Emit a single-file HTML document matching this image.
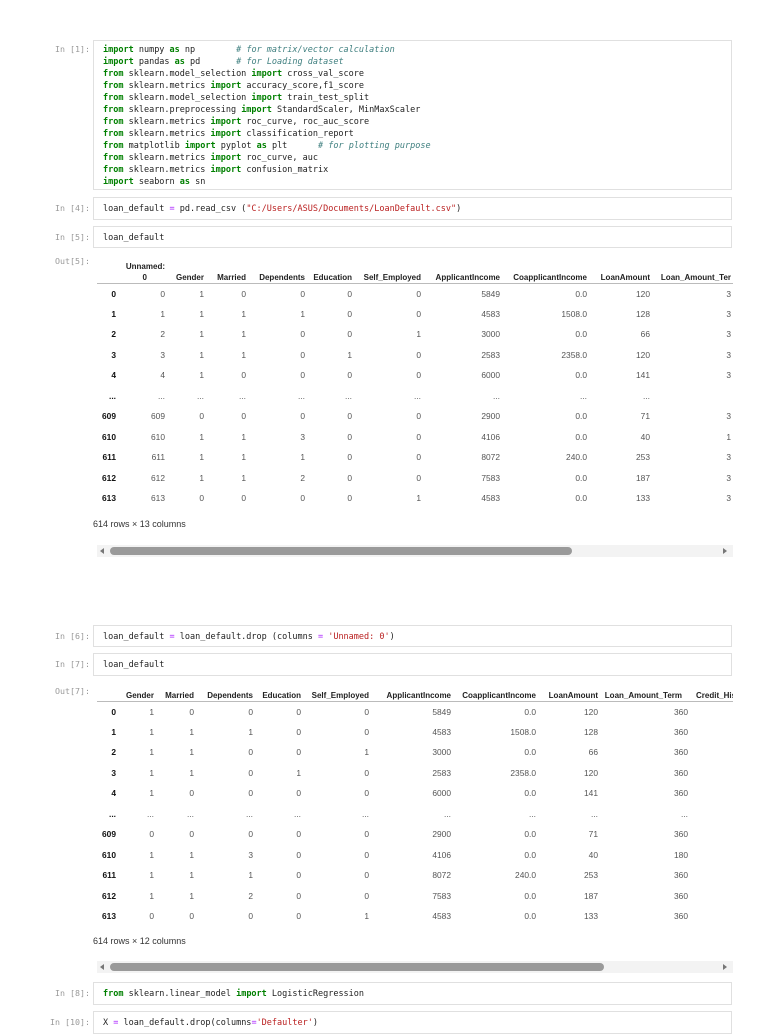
<!DOCTYPE html>
<html><head><meta charset="utf-8">
<style>
*{margin:0;padding:0;box-sizing:border-box}
body{width:768px;height:1024px;background:#fff;position:relative;overflow:hidden;font-family:"Liberation Sans",sans-serif}
.lbl{position:absolute;left:46px;font-family:"DejaVu Sans Mono",monospace;font-size:8.3px;color:#999;width:44px;text-align:right}
.box{position:absolute;left:93px;width:639px;border:1px solid #e0e0e0;background:#fff;font-family:"DejaVu Sans Mono",monospace;font-size:8.5px;color:#222;padding:3px 9px;line-height:12px;white-space:pre}
.k{color:#008000;font-weight:bold}.c{color:#408080;font-style:italic}.s{color:#ba2121}.o{color:#aa22ff}
.tw{position:absolute;left:97px;width:636px;max-width:636px;overflow:hidden;clip-path:inset(0 0 0 0)}
table{border-collapse:collapse;table-layout:fixed;font-size:8.4px;color:#222}
th{font-weight:bold;font-size:8px;text-align:right;line-height:11px;vertical-align:bottom;white-space:nowrap;overflow:hidden}
td{text-align:right;height:20.5px;white-space:nowrap;overflow:hidden;color:#555}
td.i{font-weight:bold;color:#111}
thead tr{border-bottom:1px solid #bbb}
.rows{position:absolute;left:93px;font-size:9px;color:#333}
.sb{position:absolute;left:97px;width:636px;height:12px;background:#f3f3f3}
.sb .t{position:absolute;left:13px;top:2px;height:8px;background:#9a9a9a;border-radius:4px}
.sb .l{position:absolute;left:3px;top:3px;border-right:4px solid #777;border-top:3px solid transparent;border-bottom:3px solid transparent}
.sb .r{position:absolute;right:6px;top:3px;border-left:4px solid #777;border-top:3px solid transparent;border-bottom:3px solid transparent}
</style></head><body>

<div class="lbl" style="top:44px">In [1]:</div>
<div class="box" style="top:40px;height:150px"><span class="k">import</span> numpy <span class="k">as</span> np        <span class="c"># for matrix/vector calculation</span>
<span class="k">import</span> pandas <span class="k">as</span> pd       <span class="c"># for Loading dataset</span>
<span class="k">from</span> sklearn.model_selection <span class="k">import</span> cross_val_score
<span class="k">from</span> sklearn.metrics <span class="k">import</span> accuracy_score,f1_score
<span class="k">from</span> sklearn.model_selection <span class="k">import</span> train_test_split
<span class="k">from</span> sklearn.preprocessing <span class="k">import</span> StandardScaler, MinMaxScaler
<span class="k">from</span> sklearn.metrics <span class="k">import</span> roc_curve, roc_auc_score
<span class="k">from</span> sklearn.metrics <span class="k">import</span> classification_report
<span class="k">from</span> matplotlib <span class="k">import</span> pyplot <span class="k">as</span> plt      <span class="c"># for plotting purpose</span>
<span class="k">from</span> sklearn.metrics <span class="k">import</span> roc_curve, auc
<span class="k">from</span> sklearn.metrics <span class="k">import</span> confusion_matrix
<span class="k">import</span> seaborn <span class="k">as</span> sn</div>

<div class="lbl" style="top:203px">In [4]:</div>
<div class="box" style="top:197px;height:23px;padding-top:5px">loan_default <span class="o">=</span> pd.read_csv (<span class="s">"C:/Users/ASUS/Documents/LoanDefault.csv"</span>)</div>
<div class="lbl" style="top:232px">In [5]:</div>
<div class="box" style="top:226px;height:22px;padding-top:5px">loan_default</div>
<div class="lbl" style="top:256px">Out[5]:</div>

<div class="tw" style="top:254px">
<table style="width:636px">
<colgroup><col style="width:19px"><col style="width:49px"><col style="width:39px"><col style="width:42px"><col style="width:59px"><col style="width:47px"><col style="width:69px"><col style="width:79px"><col style="width:87px"><col style="width:63px"><col style="width:81px"><col style="width:2px"></colgroup>
<thead><tr style="height:29px"><th></th><th style="text-align:right">Unnamed:<br><span style="padding-right:18px">0</span></th><th>Gender</th><th>Married</th><th>Dependents</th><th>Education</th><th>Self_Employed</th><th>ApplicantIncome</th><th>CoapplicantIncome</th><th>LoanAmount</th><th>Loan_Amount_Ter</th><th></th></tr></thead>
<tbody>
<tr><td class="i">0</td><td>0</td><td>1</td><td>0</td><td>0</td><td>0</td><td>0</td><td>5849</td><td>0.0</td><td>120</td><td>3</td><td></td></tr>
<tr><td class="i">1</td><td>1</td><td>1</td><td>1</td><td>1</td><td>0</td><td>0</td><td>4583</td><td>1508.0</td><td>128</td><td>3</td><td></td></tr>
<tr><td class="i">2</td><td>2</td><td>1</td><td>1</td><td>0</td><td>0</td><td>1</td><td>3000</td><td>0.0</td><td>66</td><td>3</td><td></td></tr>
<tr><td class="i">3</td><td>3</td><td>1</td><td>1</td><td>0</td><td>1</td><td>0</td><td>2583</td><td>2358.0</td><td>120</td><td>3</td><td></td></tr>
<tr><td class="i">4</td><td>4</td><td>1</td><td>0</td><td>0</td><td>0</td><td>0</td><td>6000</td><td>0.0</td><td>141</td><td>3</td><td></td></tr>
<tr><td class="i">...</td><td>...</td><td>...</td><td>...</td><td>...</td><td>...</td><td>...</td><td>...</td><td>...</td><td>...</td><td></td><td></td></tr>
<tr><td class="i">609</td><td>609</td><td>0</td><td>0</td><td>0</td><td>0</td><td>0</td><td>2900</td><td>0.0</td><td>71</td><td>3</td><td></td></tr>
<tr><td class="i">610</td><td>610</td><td>1</td><td>1</td><td>3</td><td>0</td><td>0</td><td>4106</td><td>0.0</td><td>40</td><td>1</td><td></td></tr>
<tr><td class="i">611</td><td>611</td><td>1</td><td>1</td><td>1</td><td>0</td><td>0</td><td>8072</td><td>240.0</td><td>253</td><td>3</td><td></td></tr>
<tr><td class="i">612</td><td>612</td><td>1</td><td>1</td><td>2</td><td>0</td><td>0</td><td>7583</td><td>0.0</td><td>187</td><td>3</td><td></td></tr>
<tr><td class="i">613</td><td>613</td><td>0</td><td>0</td><td>0</td><td>0</td><td>1</td><td>4583</td><td>0.0</td><td>133</td><td>3</td><td></td></tr>
</tbody></table></div>
<div class="rows" style="top:519px">614 rows × 13 columns</div>
<div class="sb" style="top:545px"><div class="l"></div><div class="t" style="width:462px"></div><div class="r"></div></div>

<div class="lbl" style="top:631px">In [6]:</div>
<div class="box" style="top:625px;height:22px;padding-top:5px">loan_default <span class="o">=</span> loan_default.drop (columns <span class="o">=</span> <span class="s">'Unnamed: 0'</span>)</div>
<div class="lbl" style="top:659px">In [7]:</div>
<div class="box" style="top:653px;height:23px;padding-top:5px">loan_default</div>
<div class="lbl" style="top:686px">Out[7]:</div>

<div class="tw" style="top:681px">
<table style="width:636px">
<colgroup><col style="width:19px"><col style="width:38px"><col style="width:40px"><col style="width:59px"><col style="width:48px"><col style="width:68px"><col style="width:82px"><col style="width:85px"><col style="width:62px"><col style="width:90px"><col style="width:45px"></colgroup>
<thead><tr style="height:20px"><th></th><th>Gender</th><th>Married</th><th>Dependents</th><th>Education</th><th>Self_Employed</th><th>ApplicantIncome</th><th>CoapplicantIncome</th><th>LoanAmount</th><th style="padding-right:6px">Loan_Amount_Term</th><th style="text-align:left;padding-left:8px">Credit_History</th></tr></thead>
<tbody>
<tr><td class="i">0</td><td>1</td><td>0</td><td>0</td><td>0</td><td>0</td><td>5849</td><td>0.0</td><td>120</td><td>360</td><td></td></tr>
<tr><td class="i">1</td><td>1</td><td>1</td><td>1</td><td>0</td><td>0</td><td>4583</td><td>1508.0</td><td>128</td><td>360</td><td></td></tr>
<tr><td class="i">2</td><td>1</td><td>1</td><td>0</td><td>0</td><td>1</td><td>3000</td><td>0.0</td><td>66</td><td>360</td><td></td></tr>
<tr><td class="i">3</td><td>1</td><td>1</td><td>0</td><td>1</td><td>0</td><td>2583</td><td>2358.0</td><td>120</td><td>360</td><td></td></tr>
<tr><td class="i">4</td><td>1</td><td>0</td><td>0</td><td>0</td><td>0</td><td>6000</td><td>0.0</td><td>141</td><td>360</td><td></td></tr>
<tr><td class="i">...</td><td>...</td><td>...</td><td>...</td><td>...</td><td>...</td><td>...</td><td>...</td><td>...</td><td>...</td><td></td></tr>
<tr><td class="i">609</td><td>0</td><td>0</td><td>0</td><td>0</td><td>0</td><td>2900</td><td>0.0</td><td>71</td><td>360</td><td></td></tr>
<tr><td class="i">610</td><td>1</td><td>1</td><td>3</td><td>0</td><td>0</td><td>4106</td><td>0.0</td><td>40</td><td>180</td><td></td></tr>
<tr><td class="i">611</td><td>1</td><td>1</td><td>1</td><td>0</td><td>0</td><td>8072</td><td>240.0</td><td>253</td><td>360</td><td></td></tr>
<tr><td class="i">612</td><td>1</td><td>1</td><td>2</td><td>0</td><td>0</td><td>7583</td><td>0.0</td><td>187</td><td>360</td><td></td></tr>
<tr><td class="i">613</td><td>0</td><td>0</td><td>0</td><td>0</td><td>1</td><td>4583</td><td>0.0</td><td>133</td><td>360</td><td></td></tr>
</tbody></table></div>
<div class="rows" style="top:936px">614 rows × 12 columns</div>
<div class="sb" style="top:961px"><div class="l"></div><div class="t" style="width:494px"></div><div class="r"></div></div>

<div class="lbl" style="top:988px">In [8]:</div>
<div class="box" style="top:982px;height:23px;padding-top:5px"><span class="k">from</span> sklearn.linear_model <span class="k">import</span> LogisticRegression</div>
<div class="lbl" style="top:1017px">In [10]:</div>
<div class="box" style="top:1011px;height:23px;padding-top:5px">X <span class="o">=</span> loan_default.drop(columns<span class="o">=</span><span class="s">'Defaulter'</span>)</div>
</body></html>
